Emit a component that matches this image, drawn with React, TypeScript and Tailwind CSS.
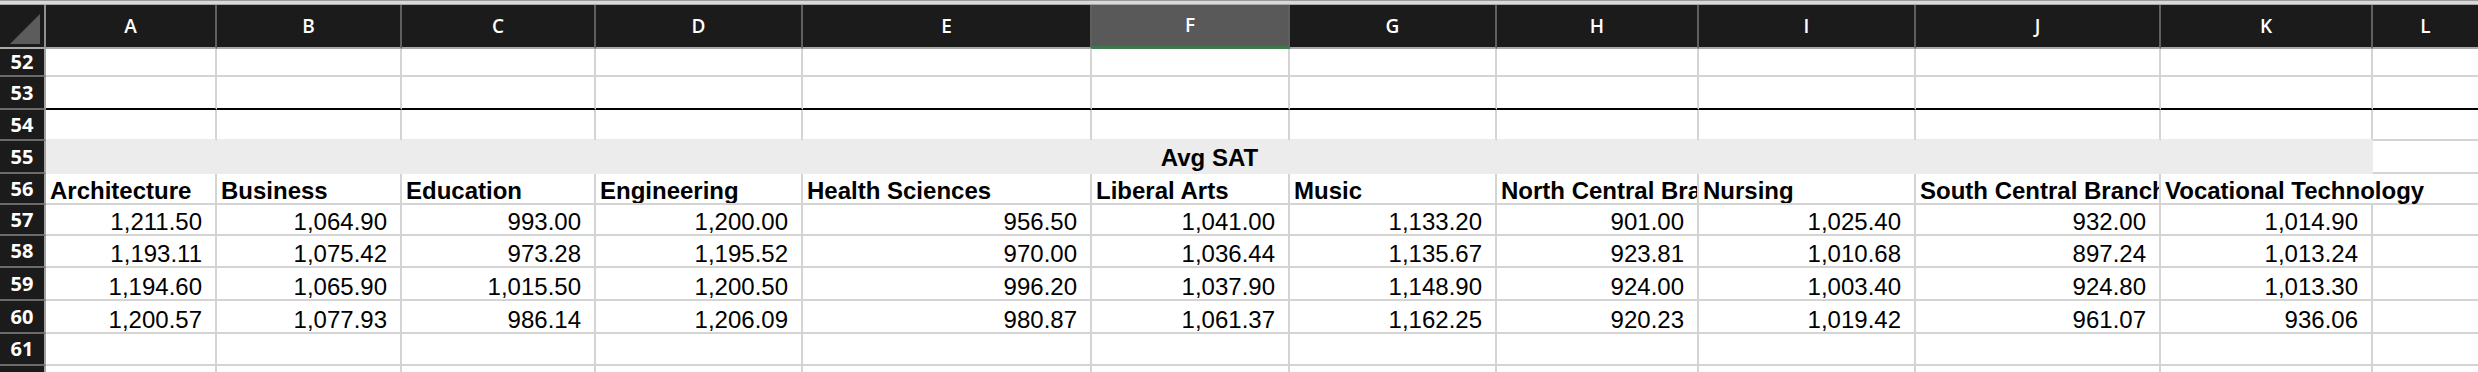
import React from "react";

type Col = { key: string; w: string };

const cols: Col[] = [
  { key: "A", w: "w-[171px]" },
  { key: "B", w: "w-[185px]" },
  { key: "C", w: "w-[194px]" },
  { key: "D", w: "w-[207px]" },
  { key: "E", w: "w-[289px]" },
  { key: "F", w: "w-[198px]" },
  { key: "G", w: "w-[207px]" },
  { key: "H", w: "w-[202px]" },
  { key: "I", w: "w-[217px]" },
  { key: "J", w: "w-[245px]" },
  { key: "K", w: "w-[212px]" },
];

const headers = [
  "Architecture",
  "Business",
  "Education",
  "Engineering",
  "Health Sciences",
  "Liberal Arts",
  "Music",
  "North Central Branch",
  "Nursing",
  "South Central Branch",
  "Vocational Technology",
];

const data: string[][] = [
  ["1,211.50", "1,064.90", "993.00", "1,200.00", "956.50", "1,041.00", "1,133.20", "901.00", "1,025.40", "932.00", "1,014.90"],
  ["1,193.11", "1,075.42", "973.28", "1,195.52", "970.00", "1,036.44", "1,135.67", "923.81", "1,010.68", "897.24", "1,013.24"],
  ["1,194.60", "1,065.90", "1,015.50", "1,200.50", "996.20", "1,037.90", "1,148.90", "924.00", "1,003.40", "924.80", "1,013.30"],
  ["1,200.57", "1,077.93", "986.14", "1,206.09", "980.87", "1,061.37", "1,162.25", "920.23", "1,019.42", "961.07", "936.06"],
];

function RowHead({ n }: { n?: number }) {
  return (
    <div className="w-[46px] shrink-0 bg-[#1b1b1b] border-r-2 border-r-[#a3a3a3] border-b-2 border-b-[#6a6a6a] flex items-center justify-center text-white text-[20px] font-bold font-['Open_Sans',sans-serif] leading-none">
      {n}
    </div>
  );
}

function EmptyRow({ n, h, bottom }: { n?: number; h: string; bottom?: string }) {
  return (
    <div className={`flex ${h}`}>
      <RowHead n={n} />
      {cols.map((c) => (
        <div
          key={c.key}
          className={`${c.w} shrink-0 border-r-2 border-r-[#d4d4d4] border-b-2 ${bottom ?? "border-b-[#d4d4d4]"}`}
        />
      ))}
      <div className={`flex-1 border-b-2 ${bottom === "border-b-black" ? "border-b-black" : "border-b-[#d4d4d4]"}`} />
    </div>
  );
}

export default function App() {
  return (
    <div className="w-[2478px] h-[372px] overflow-hidden bg-white text-black font-['Liberation_Sans',Arial,sans-serif]">
      {/* top strip */}
      <div className="h-[5px] bg-[#d9d9d9] border-t border-t-[#9a9a9a] border-b border-b-[#a8a8a8]" />
      {/* column header */}
      <div className="flex h-[44px]">
        <div className="w-[46px] shrink-0 bg-[#1b1b1b] border-r-2 border-r-[#8f8f8f] border-b-2 border-b-[#a9a9a9]">
          <svg width="44" height="42" viewBox="0 0 44 42">
            <polygon points="10,39 40,39 40,9" fill="#5c5c5c" />
          </svg>
        </div>
        {cols.map((c) =>
          c.key === "F" ? (
            <div
              key={c.key}
              className={`${c.w} shrink-0 bg-[#595959] border-r-2 border-r-[#5f5f5f] border-b-[3px] border-b-[#3c7a4e] flex items-center justify-center text-white text-[19px] font-semibold font-['Open_Sans',sans-serif]`}
            >
              {c.key}
            </div>
          ) : (
            <div
              key={c.key}
              className={`${c.w} shrink-0 bg-[#1b1b1b] border-r-2 border-r-[#5f5f5f] border-b-2 border-b-[#a9a9a9] flex items-center justify-center text-white text-[19px] font-semibold font-['Open_Sans',sans-serif]`}
            >
              {c.key}
            </div>
          )
        )}
        <div className="flex-1 bg-[#1b1b1b] border-b-2 border-b-[#a9a9a9] flex items-center justify-center text-white text-[19px] font-semibold font-['Open_Sans',sans-serif]">
          L
        </div>
      </div>

      <EmptyRow n={52} h="h-[28px]" />
      <EmptyRow n={53} h="h-[33px]" bottom="border-b-black" />
      <EmptyRow n={54} h="h-[31px]" bottom="border-b-[#ececec]" />

      {/* row 55 merged title */}
      <div className="flex h-[33px]">
        <RowHead n={55} />
        <div className="w-[2327px] shrink-0 bg-[#ececec] flex items-center justify-center text-[24px] leading-[24px] font-bold">
          Avg SAT
        </div>
        <div className="flex-1 border-b-2 border-b-[#d4d4d4]" />
      </div>

      {/* row 56 headers */}
      <div className="flex h-[31px]">
        <RowHead n={56} />
        {cols.map((c, i) =>
          c.key === "K" ? (
            <div
              key={c.key}
              className={`${c.w} shrink-0 relative z-10 border-b-2 border-b-[#d4d4d4] flex items-end pl-[4px] whitespace-nowrap overflow-visible text-[24px] leading-[24px] font-bold`}
            >
              {headers[i]}
            </div>
          ) : (
            <div
              key={c.key}
              className={`${c.w} shrink-0 border-r-2 border-r-[#d4d4d4] border-b-2 border-b-[#d4d4d4] flex items-end pl-[4px] whitespace-nowrap overflow-hidden text-[24px] leading-[24px] font-bold`}
            >
              {headers[i]}
            </div>
          )
        )}
        <div className="flex-1 border-b-2 border-b-[#d4d4d4]" />
      </div>

      {/* data rows */}
      {data.map((row, ri) => (
        <div key={ri} className={`flex ${["h-[31px]", "h-[32px]", "h-[33px]", "h-[33px]"][ri]}`}>
          <RowHead n={57 + ri} />
          {cols.map((c, i) => (
            <div
              key={c.key}
              className={`${c.w} shrink-0 border-r-2 border-r-[#d4d4d4] border-b-2 border-b-[#d4d4d4] flex items-end justify-end pr-[13px] whitespace-nowrap text-[24px] leading-[24px]`}
            >
              {row[i]}
            </div>
          ))}
          <div className="flex-1 border-b-2 border-b-[#d4d4d4]" />
        </div>
      ))}

      <EmptyRow n={61} h="h-[32px]" />
      <EmptyRow h="h-[32px]" />
    </div>
  );
}
